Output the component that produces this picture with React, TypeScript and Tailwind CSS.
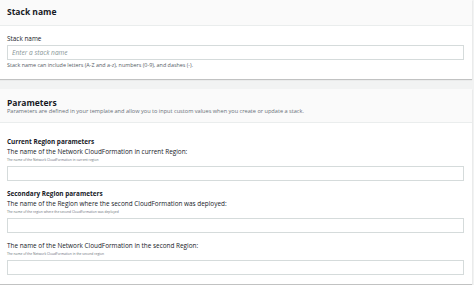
const font = { fontFamily: '"Open Sans", "Noto Sans", sans-serif' };

function Field({ label, desc }: { label: string; desc: string }) {
  return (
    <div className="flex flex-col">
      <div className="text-[6.4px] leading-[9px] text-[#16191f]">{label}</div>
      <div className="text-[3.3px] leading-[7px] text-[#687078]">{desc}</div>
      <div className="mt-[3px] h-[15px] w-[457px] border border-[#d5dbdb] bg-white" />
    </div>
  );
}

export default function App() {
  return (
    <div className="h-[285px] w-[474px] overflow-hidden bg-[#f2f3f3]" style={font}>
      {/* Stack name */}
      <section className="w-[472px] bg-white shadow-[0_1px_1px_rgba(0,0,0,0.2)]">
        <div className="flex h-[26px] items-center border-b border-[#eaeded] bg-[#fafafa] px-[7px]">
          <h2 className="text-[8.5px] font-bold text-[#16191f]">Stack name</h2>
        </div>
        <div className="flex h-[53px] flex-col px-[7px] pt-[8px]">
          <div className="text-[6.4px] leading-[10px] text-[#16191f]">Stack name</div>
          <div className="mt-[1px] flex h-[15px] w-[457px] items-center border border-[#d5dbdb] bg-white px-[4px]">
            <span className="text-[6.6px] italic text-[#879596]">Enter a stack name</span>
          </div>
          <div className="mt-[2px] text-[5.4px] leading-[7px] text-[#545b64]">
            Stack name can include letters (A-Z and a-z), numbers (0-9), and dashes (-).
          </div>
        </div>
      </section>

      {/* Parameters */}
      <section className="mt-[10px] w-[472px] bg-white shadow-[0_1px_1px_rgba(0,0,0,0.2)]">
        <div className="flex h-[34px] flex-col justify-center border-b border-[#eaeded] bg-[#fafafa] px-[7px]">
          <h2 className="text-[8.5px] font-bold leading-[11px] text-[#16191f]">Parameters</h2>
          <p className="text-[5.6px] leading-[7px] text-[#687078]">
            Parameters are defined in your template and allow you to input custom values when you create or update a stack.
          </p>
        </div>
        <div className="flex h-[161px] flex-col px-[7px] pt-[13px]">
          <div className="text-[6.4px] font-bold leading-[11px] text-[#16191f]">Current Region parameters</div>
          <Field
            label="The name of the Network CloudFormation in current Region:"
            desc="The name of the Network CloudFormation in current region"
          />
          <div className="mt-[7px] text-[6.4px] font-bold leading-[11px] text-[#16191f]">Secondary Region parameters</div>
          <Field
            label="The name of the Region where the second CloudFormation was deployed:"
            desc="The name of the region where the second CloudFormation was deployed"
          />
          <div className="mt-[8px]">
            <Field
              label="The name of the Network CloudFormation in the second Region:"
              desc="The name of the Network CloudFormation in the second region"
            />
          </div>
        </div>
      </section>
    </div>
  );
}
